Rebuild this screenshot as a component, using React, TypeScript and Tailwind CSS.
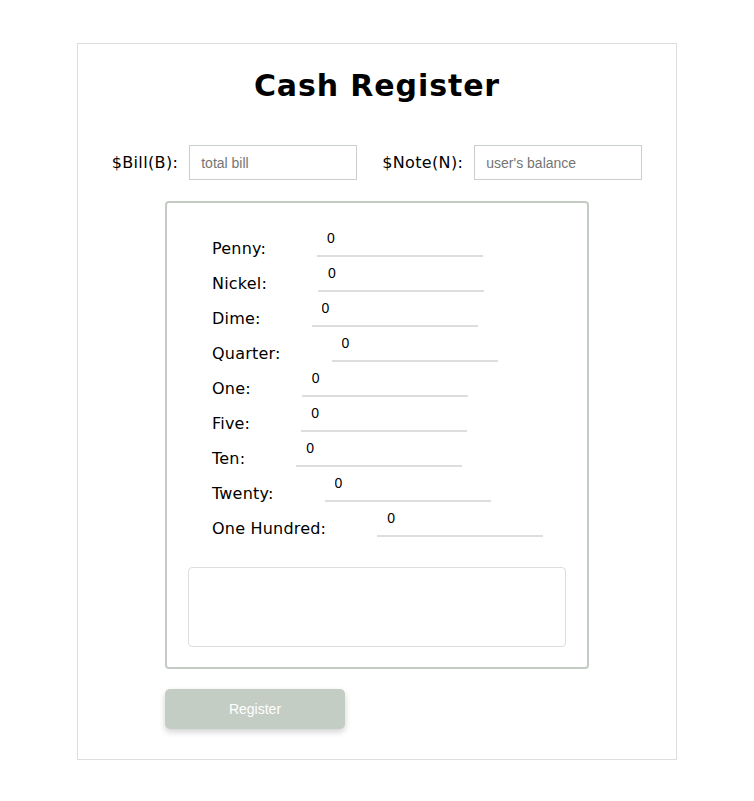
import React from "react";

const coins = [
  "Penny",
  "Nickel",
  "Dime",
  "Quarter",
  "One",
  "Five",
  "Ten",
  "Twenty",
  "One Hundred",
];

export default function App() {
  return (
    <div className="min-h-screen bg-white pt-[43px] font-['DejaVu_Sans',Verdana,sans-serif] text-black">
      <div className="mx-auto w-[600px] border border-[#dddddd] pt-[24px] pb-[30px]">
        {/* title */}
        <h1 className="text-center text-[30px] font-bold leading-[36px] tracking-[0.9px]">
          Cash Register
        </h1>

        {/* bill + note */}
        <div className="mt-[41px] flex items-center justify-center gap-[25px]">
          <div className="flex items-center">
            <label className="mr-[11px] text-[16px] tracking-[0.35px]">$Bill(B):</label>
            <input
              type="text"
              placeholder="total bill"
              className="h-[35px] w-[168px] border border-[#c9cfc9] pl-[11px] font-['Liberation_Sans',Arial,sans-serif] text-[14px] outline-none placeholder:text-[#757575]"
            />
          </div>
          <div className="flex items-center">
            <label className="mr-[11px] text-[16px] tracking-[0.35px]">$Note(N):</label>
            <input
              type="text"
              placeholder="user's balance"
              className="h-[35px] w-[168px] border border-[#c9cfc9] pl-[11px] font-['Liberation_Sans',Arial,sans-serif] text-[14px] outline-none placeholder:text-[#757575]"
            />
          </div>
        </div>

        {/* coin drawer */}
        <div className="mx-auto mt-[21px] w-[424px] rounded-[4px] border-2 border-[#c4cbc4] pt-[19px] pb-[20px]">
          <div className="flex flex-col pl-[45px]">
            {coins.map((name) => (
              <div key={name} className="flex h-[35px] items-end">
                <label className="mr-[51px] mb-[-1px] text-[16px] leading-[19px] tracking-[0.2px]">
                  {name}:
                </label>
                <input
                  type="text"
                  defaultValue="0"
                  className="h-[35px] w-[166px] border-b-2 border-[#dddddd] pl-[10px] pb-[2px] font-['Liberation_Sans',Arial,sans-serif] text-[14px] outline-none"
                />
              </div>
            ))}
          </div>

          <div className="mx-[21px] mt-[30px] h-[80px] rounded-[4px] border border-[#dddddd]" />
        </div>

        {/* register */}
        <div className="mx-auto mt-[20px] w-[424px]">
          <button className="h-[40px] w-[180px] rounded-[5px] bg-[#c4cdc4] font-['Liberation_Sans',Arial,sans-serif] text-[14px] text-white shadow-[0_3px_6px_rgba(0,0,0,0.18)]">
            Register
          </button>
        </div>
      </div>
    </div>
  );
}
